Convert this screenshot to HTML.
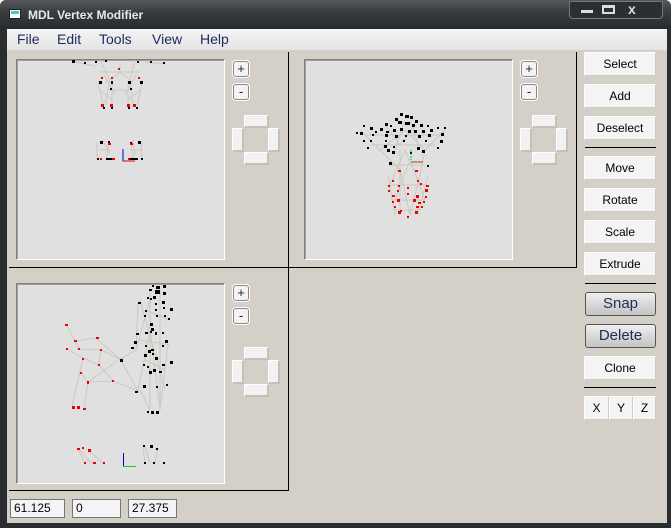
<!DOCTYPE html>
<html><head><meta charset="utf-8"><style>
*{margin:0;padding:0;box-sizing:border-box}
body{width:671px;height:528px;overflow:hidden;background:#fff;font-family:"Liberation Sans",sans-serif;position:relative}
.abs{position:absolute}
.win{left:0;top:0;width:671px;height:528px;background:#2a2d2f;border-radius:6px 6px 0 0}
.title{left:0;top:0;width:671px;height:29px;background:linear-gradient(#55595c,#3a3d40 40%,#292c2e);border-radius:6px 6px 0 0}
.ttext{left:28px;top:8px;color:#e8e8e8;font-weight:bold;font-size:12px}
.menu{left:7px;top:29px;width:660px;height:21px;background:linear-gradient(#f4f4f4,#e4e4e4)}
.menu span{position:absolute;top:2px;font-size:14px;color:#1c2a5c}
.client{left:7px;top:50px;width:660px;height:473px;background:#d4d0c8}
.canvas{background:#e0e0e0;border:1px solid #808080;border-right-color:#fff;border-bottom-color:#fff;box-shadow:inset 1px 1px 0 #a0a0a0}
.pm{width:16px;height:16px;background:#f4f4f4;border:1px solid #888;border-radius:3px;font-size:13px;line-height:13px;text-align:center;color:#223;box-shadow:0 0 0 1px #fff}
.dp{background:#f2f2f2;border-top:1px solid #fff;border-left:1px solid #fff;border-bottom:2px solid #c4c0b8;border-right:2px solid #c4c0b8}
.btn{left:584px;width:72px;height:24px;background:#f4f4f4;border:1px solid #fff;border-bottom-color:#cfcbc3;border-right-color:#cfcbc3;font-size:12px;text-align:center;line-height:22px;color:#000}
.btn2{left:585px;width:71px;height:24px;background:linear-gradient(#f0f0f0,#d8d8d8 50%,#c4c4c4);border:1px solid #555;border-radius:3px;font-size:15px;text-align:center;line-height:22px;color:#2a2a5a}
.sep{left:584px;width:72px;height:1px;background:#000}
.st{top:499px;height:19px;background:#f4f4f4;border:1px solid #777;font-size:12px;line-height:17px;padding-left:3px}
</style></head><body>
<div class="abs win"></div>
<div class="abs title"></div>
<div class="abs" style="left:9px;top:9px;width:12px;height:10px;background:#fff;border:1px solid #222"><div style="margin:1px;height:3px;background:#4cc"></div></div>
<div class="abs ttext">MDL Vertex Modifier</div>
<div class="abs" style="left:569px;top:1px;width:94px;height:18px;background:#2c2f31;border:1px solid #777;border-radius:0 0 4px 4px"></div>
<div class="abs" style="left:581px;top:10px;width:12px;height:3px;background:#ddd"></div>
<div class="abs" style="left:602px;top:5px;width:13px;height:9px;border:2px solid #ddd;border-top-width:3px"></div>
<div class="abs" style="left:628px;top:1px;color:#ddd;font-weight:bold;font-size:14px">x</div>
<div class="abs menu"><span style="left:10px">File</span><span style="left:50px">Edit</span><span style="left:92px">Tools</span><span style="left:145px">View</span><span style="left:193px">Help</span></div>
<div class="abs client"></div>
<div class="abs" style="left:288px;top:52px;width:1px;height:439px;background:#000"></div>
<div class="abs" style="left:576px;top:52px;width:1px;height:216px;background:#000"></div>
<div class="abs" style="left:9px;top:267px;width:568px;height:1px;background:#000"></div>
<div class="abs" style="left:9px;top:490px;width:280px;height:1px;background:#000"></div>

<div class="abs canvas" style="left:16px;top:59px;width:209px;height:201px"></div>
<div class="abs canvas" style="left:304px;top:59px;width:209px;height:201px"></div>
<div class="abs canvas" style="left:16px;top:283px;width:209px;height:201px"></div>

<svg class="abs" style="left:0;top:0" width="671" height="528">
<g stroke="#cdc8c0" stroke-width="1" fill="none">
<path d="M100 60L110 80L105 105M135 60L130 80L133 105M110 80L120 72L130 80M100 72L140 72M108 90L130 90M103 140L110 155M133 140L135 155M98 82L104 108M112 82L112 108M128 82L128 108M142 82L137 108M100 90L112 100M140 90L128 100M104 75L115 95M136 75L125 95M97 142L97 160M109 142L106 160M131 142L133 160M141 142L142 160M100 150L110 150M130 150L141 150M75 62L95 66M145 62L165 64M120 62L120 72"/>
<path d="M360 130L380 150L400 170L410 215M445 130L425 150L420 175L410 215M380 150L405 130L425 150M390 185L405 150L420 185M395 200L410 160L425 200M400 150L400 215M365 135L440 135M370 145L435 145M385 125L400 145L415 125M390 165L425 165M388 185L428 185M390 200L425 200M395 210L420 210M388 175L395 215M428 175L418 215M405 120L395 150M410 120L420 150"/>
<path d="M66 324L75 341L79 349L101 350L120 359L136 350L150 300M67 349L83 358L99 365M81 373L88 382L113 381L138 391L150 330M72 407L83 358M84 409L88 382M120 359L138 391M136 350L138 303M150 330L160 410M140 300L165 390M75 341L96 338L120 359M101 350L99 365L113 381M83 358L72 407M88 382L120 359M145 310L170 320M140 340L170 345M145 360L165 370M150 290L150 410M160 290L160 410M140 390L150 410M168 345L160 410"/>
<path d="M80 450L88 460L92 463M145 447L150 463M158 448L155 463M78 449L85 463M88 450L103 463M143 447L145 463"/>
</g>
<g fill="#000">
<rect x="72" y="60" width="3" height="3"/><rect x="84" y="62" width="2" height="2"/><rect x="95" y="61" width="2" height="2"/><rect x="105" y="60" width="2" height="2"/><rect x="137" y="61" width="2" height="2"/><rect x="150" y="61" width="2" height="2"/><rect x="163" y="62" width="2" height="2"/>
<rect x="99" y="81" width="3" height="3"/><rect x="111" y="81" width="2" height="3"/><rect x="128" y="81" width="3" height="3"/><rect x="140" y="81" width="3" height="3"/><rect x="110" y="88" width="2" height="2"/><rect x="130" y="88" width="2" height="2"/>
<rect x="103" y="107" width="2" height="2"/><rect x="111" y="107" width="2" height="2"/><rect x="128" y="107" width="2" height="2"/><rect x="136" y="107" width="2" height="2"/>
<rect x="100" y="141" width="3" height="3"/><rect x="108" y="141" width="2" height="2"/><rect x="138" y="141" width="3" height="3"/><rect x="130" y="142" width="2" height="2"/>
<rect x="97" y="158" width="2" height="2"/><rect x="106" y="158" width="6" height="2"/><rect x="130" y="158" width="8" height="2"/><rect x="141" y="158" width="2" height="2"/>
</g>
<g fill="#e00">
<rect x="101" y="104" width="3" height="3"/><rect x="110" y="104" width="3" height="3"/><rect x="127" y="104" width="3" height="3"/><rect x="133" y="104" width="3" height="3"/><rect x="101" y="77" width="2" height="2"/><rect x="111" y="77" width="2" height="2"/><rect x="118" y="68" width="2" height="2"/><rect x="138" y="77" width="2" height="2"/><rect x="108" y="143" width="3" height="2"/><rect x="130" y="143" width="3" height="2"/><rect x="100" y="158" width="2" height="2"/><rect x="112" y="158" width="3" height="2"/><rect x="128" y="158" width="2" height="2"/>
</g>
<path d="M123 149V161H135" stroke="#00c" stroke-width="1" fill="none"/><path d="M123 161H135" stroke="#e00"/>
<g fill="#000">
<rect x="400" y="113" width="3" height="3"/><rect x="405" y="115" width="4" height="3"/><rect x="410" y="116" width="3" height="3"/><rect x="395" y="118" width="3" height="3"/><rect x="415" y="120" width="3" height="3"/>
<rect x="385" y="123" width="3" height="3"/><rect x="390" y="125" width="2" height="2"/><rect x="398" y="121" width="4" height="3"/><rect x="405" y="122" width="5" height="3"/><rect x="412" y="124" width="3" height="3"/><rect x="420" y="124" width="3" height="3"/><rect x="427" y="125" width="2" height="2"/>
<rect x="363" y="125" width="2" height="2"/><rect x="370" y="127" width="3" height="3"/><rect x="375" y="131" width="2" height="2"/><rect x="380" y="128" width="3" height="3"/><rect x="386" y="131" width="3" height="2"/><rect x="393" y="129" width="3" height="3"/><rect x="400" y="128" width="3" height="3"/><rect x="408" y="130" width="3" height="3"/><rect x="414" y="130" width="3" height="3"/><rect x="422" y="130" width="3" height="3"/><rect x="430" y="129" width="3" height="3"/><rect x="437" y="127" width="2" height="2"/><rect x="444" y="127" width="2" height="2"/>
<rect x="356" y="132" width="2" height="2"/><rect x="360" y="132" width="3" height="3"/><rect x="372" y="134" width="2" height="2"/><rect x="385" y="134" width="3" height="3"/><rect x="395" y="135" width="3" height="3"/><rect x="405" y="135" width="2" height="2"/><rect x="418" y="135" width="3" height="3"/><rect x="428" y="134" width="3" height="3"/><rect x="441" y="133" width="3" height="3"/>
<rect x="363" y="140" width="2" height="2"/><rect x="370" y="140" width="2" height="2"/><rect x="385" y="140" width="2" height="2"/><rect x="403" y="140" width="2" height="2"/><rect x="425" y="140" width="2" height="2"/><rect x="440" y="140" width="3" height="3"/>
<rect x="367" y="147" width="2" height="2"/><rect x="384" y="145" width="3" height="3"/><rect x="393" y="146" width="2" height="2"/><rect x="417" y="147" width="3" height="3"/><rect x="437" y="147" width="2" height="2"/>
<rect x="387" y="149" width="3" height="3"/><rect x="392" y="151" width="3" height="3"/><rect x="422" y="150" width="3" height="3"/><rect x="410" y="152" width="2" height="2"/>
<rect x="389" y="162" width="3" height="3"/><rect x="427" y="165" width="2" height="2"/>
</g>
<g fill="#e00">
<rect x="398" y="170" width="3" height="2"/><rect x="415" y="170" width="3" height="2"/><rect x="392" y="180" width="2" height="2"/><rect x="417" y="180" width="2" height="2"/><rect x="388" y="185" width="2" height="2"/><rect x="398" y="185" width="2" height="2"/><rect x="420" y="183" width="2" height="2"/><rect x="426" y="185" width="3" height="2"/>
<rect x="388" y="190" width="2" height="2"/><rect x="397" y="190" width="2" height="2"/><rect x="407" y="187" width="2" height="2"/><rect x="425" y="189" width="3" height="3"/><rect x="392" y="195" width="3" height="2"/><rect x="407" y="193" width="2" height="2"/><rect x="416" y="195" width="3" height="3"/><rect x="425" y="196" width="2" height="2"/>
<rect x="392" y="201" width="2" height="2"/><rect x="397" y="199" width="3" height="3"/><rect x="413" y="199" width="3" height="3"/><rect x="418" y="202" width="3" height="2"/><rect x="423" y="201" width="2" height="2"/>
<rect x="394" y="206" width="2" height="2"/><rect x="400" y="210" width="2" height="2"/><rect x="416" y="206" width="3" height="2"/><rect x="421" y="206" width="2" height="2"/><rect x="398" y="211" width="3" height="3"/><rect x="415" y="211" width="3" height="3"/><rect x="407" y="216" width="2" height="2"/>
</g>
<path d="M411 150V160M411 162H423" stroke="#0c0" stroke-dasharray="2 1"/><path d="M412 162H423" stroke="#e00" stroke-dasharray="2 1"/>
<g fill="#000">
<rect x="152" y="285" width="2" height="2"/><rect x="156" y="286" width="4" height="3"/><rect x="163" y="285" width="3" height="3"/><rect x="149" y="289" width="3" height="2"/><rect x="155" y="290" width="5" height="4"/><rect x="163" y="292" width="3" height="3"/><rect x="153" y="296" width="3" height="3"/><rect x="147" y="297" width="2" height="2"/>
<rect x="138" y="302" width="3" height="2"/><rect x="150" y="298" width="2" height="2"/><rect x="155" y="303" width="2" height="2"/><rect x="162" y="301" width="3" height="3"/><rect x="145" y="310" width="2" height="2"/><rect x="155" y="309" width="2" height="2"/><rect x="163" y="307" width="2" height="2"/><rect x="170" y="308" width="3" height="3"/>
<rect x="144" y="315" width="2" height="2"/><rect x="156" y="315" width="2" height="2"/><rect x="164" y="315" width="2" height="2"/><rect x="168" y="318" width="2" height="2"/><rect x="150" y="323" width="3" height="3"/><rect x="151" y="328" width="3" height="3"/>
<rect x="136" y="333" width="3" height="2"/><rect x="145" y="332" width="3" height="2"/><rect x="150" y="331" width="2" height="2"/><rect x="155" y="332" width="2" height="3"/><rect x="162" y="332" width="2" height="2"/>
<rect x="134" y="341" width="3" height="3"/><rect x="165" y="340" width="3" height="3"/><rect x="131" y="347" width="3" height="2"/><rect x="145" y="345" width="2" height="2"/><rect x="162" y="345" width="2" height="2"/>
<rect x="148" y="350" width="3" height="3"/><rect x="151" y="349" width="3" height="2"/><rect x="144" y="354" width="3" height="3"/><rect x="152" y="353" width="2" height="2"/><rect x="155" y="357" width="3" height="3"/><rect x="170" y="361" width="3" height="3"/>
<rect x="120" y="359" width="3" height="3"/><rect x="143" y="364" width="2" height="2"/><rect x="147" y="366" width="2" height="2"/><rect x="162" y="364" width="3" height="2"/><rect x="149" y="371" width="3" height="3"/><rect x="153" y="369" width="3" height="3"/><rect x="159" y="371" width="3" height="2"/>
<rect x="143" y="385" width="3" height="3"/><rect x="156" y="386" width="2" height="2"/><rect x="166" y="384" width="2" height="2"/><rect x="135" y="391" width="3" height="2"/>
<rect x="147" y="411" width="2" height="2"/><rect x="151" y="411" width="3" height="3"/><rect x="156" y="411" width="3" height="3"/>
<rect x="143" y="445" width="2" height="2"/><rect x="150" y="445" width="3" height="3"/><rect x="156" y="448" width="2" height="2"/><rect x="144" y="462" width="2" height="2"/><rect x="153" y="462" width="2" height="2"/><rect x="163" y="462" width="2" height="2"/>
</g>
<g fill="#e00">
<rect x="65" y="324" width="3" height="2"/><rect x="74" y="340" width="3" height="2"/><rect x="66" y="348" width="2" height="2"/><rect x="78" y="348" width="2" height="2"/><rect x="96" y="337" width="3" height="2"/><rect x="100" y="349" width="2" height="2"/><rect x="82" y="358" width="2" height="2"/><rect x="98" y="364" width="2" height="2"/><rect x="80" y="372" width="2" height="2"/><rect x="87" y="381" width="2" height="3"/><rect x="112" y="380" width="2" height="2"/><rect x="72" y="406" width="3" height="3"/><rect x="77" y="406" width="3" height="3"/><rect x="83" y="408" width="3" height="2"/>
<rect x="77" y="448" width="3" height="2"/><rect x="82" y="447" width="2" height="2"/><rect x="88" y="449" width="3" height="3"/><rect x="84" y="462" width="2" height="2"/><rect x="93" y="462" width="3" height="2"/><rect x="103" y="462" width="2" height="2"/>
</g>
<path d="M123.5 453V466.5H136" stroke="#00c" fill="none"/><path d="M123 466.5H136" stroke="#0d0"/>
</svg>

<div class="abs pm" style="left:233px;top:61px">+</div>
<div class="abs pm" style="left:233px;top:84px">-</div>
<div class="abs pm" style="left:521px;top:61px">+</div>
<div class="abs pm" style="left:521px;top:84px">-</div>
<div class="abs pm" style="left:233px;top:285px">+</div>
<div class="abs pm" style="left:233px;top:308px">-</div>

<div class="abs dp" style="left:244px;top:115px;width:25px;height:13px"></div>
<div class="abs dp" style="left:232px;top:128px;width:12px;height:24px"></div>
<div class="abs dp" style="left:268px;top:128px;width:12px;height:24px"></div>
<div class="abs dp" style="left:244px;top:152px;width:25px;height:13px"></div>
<div class="abs dp" style="left:532px;top:115px;width:25px;height:13px"></div>
<div class="abs dp" style="left:520px;top:128px;width:12px;height:24px"></div>
<div class="abs dp" style="left:556px;top:128px;width:12px;height:24px"></div>
<div class="abs dp" style="left:532px;top:152px;width:25px;height:13px"></div>
<div class="abs dp" style="left:244px;top:347px;width:25px;height:13px"></div>
<div class="abs dp" style="left:232px;top:360px;width:12px;height:24px"></div>
<div class="abs dp" style="left:268px;top:360px;width:12px;height:24px"></div>
<div class="abs dp" style="left:244px;top:384px;width:25px;height:13px"></div>

<div class="abs btn" style="top:52px">Select</div>
<div class="abs btn" style="top:84px">Add</div>
<div class="abs btn" style="top:116px">Deselect</div>
<div class="abs sep" style="top:147px;left:585px;width:71px"></div>
<div class="abs btn" style="top:156px">Move</div>
<div class="abs btn" style="top:188px">Rotate</div>
<div class="abs btn" style="top:220px">Scale</div>
<div class="abs btn" style="top:252px">Extrude</div>
<div class="abs sep" style="top:283px;left:585px;width:71px"></div>
<div class="abs btn2" style="top:292px">Snap</div>
<div class="abs btn2" style="top:324px">Delete</div>
<div class="abs btn" style="top:356px">Clone</div>
<div class="abs sep" style="top:387px"></div>
<div class="abs btn" style="top:396px;width:25px">X</div>
<div class="abs btn" style="top:396px;left:609px;width:24px">Y</div>
<div class="abs btn" style="top:396px;left:633px;width:23px">Z</div>

<div class="abs st" style="left:10px;width:55px">61.125</div>
<div class="abs st" style="left:72px;width:49px">0</div>
<div class="abs st" style="left:128px;width:49px">27.375</div>
</body></html>
